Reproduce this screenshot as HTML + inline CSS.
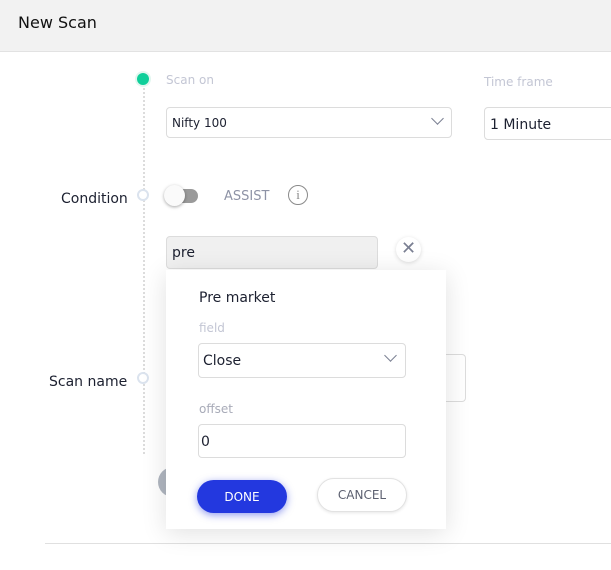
<!DOCTYPE html>
<html><head><meta charset="utf-8"><style>
*{box-sizing:border-box;margin:0;padding:0}
body{width:611px;height:570px;overflow:hidden;background:#fff;font-family:"DejaVu Sans","Liberation Sans",sans-serif;position:relative;color:#1c2030}
.a{position:absolute}
.hdr{left:0;top:0;width:611px;height:52px;background:#f2f2f2;border-bottom:1px solid #e2e2e2}
.box{border:1px solid #dcdcdc;border-radius:4px;background:#fff}
.lbl{font-size:12px;color:#c3c6d4}
.dot{width:12px;height:12px;border-radius:50%;border:2px solid #dbe3ee;background:#fff}
.chev{width:9px;height:9px;border-right:1.5px solid #7a7f92;border-bottom:1.5px solid #7a7f92;transform:rotate(45deg)}
</style></head><body>
<div class="a hdr"></div>
<div class="a" style="left:18px;top:13px;font-size:16px;color:#111">New Scan</div>

<div class="a" style="left:143px;top:84px;height:370px;border-left:2px dotted #dcdcdc"></div>
<div class="a" style="left:137px;top:73px;width:12px;height:12px;border-radius:50%;background:#0fcf9a;box-shadow:0 0 0 2px #e1f7ef"></div>
<div class="a lbl" style="left:166px;top:73px">Scan on</div>
<div class="a lbl" style="left:484px;top:75px">Time frame</div>
<div class="a box" style="left:166px;top:107px;width:286px;height:31px"></div>
<div class="a" style="left:172px;top:116px;font-size:12px">Nifty 100</div>
<div class="a chev" style="left:433px;top:114px"></div>
<div class="a box" style="left:484px;top:107px;width:140px;height:33px"></div>
<div class="a" style="left:490px;top:117px;font-size:14px">1 Minute</div>

<div class="a" style="left:61px;top:191px;font-size:14px">Condition</div>
<div class="a dot" style="left:137px;top:189px"></div>
<div class="a" style="left:166px;top:189px;width:32px;height:14px;border-radius:7px;background:#9a9a9a"></div>
<div class="a" style="left:164px;top:185px;width:21px;height:21px;border-radius:50%;background:#fafafa;box-shadow:0 1px 3px rgba(0,0,0,.35)"></div>
<div class="a" style="left:224px;top:189px;font-size:13px;color:#8e93a6">ASSIST</div>
<div class="a" style="left:288px;top:185px;width:20px;height:20px;border-radius:50%;border:1px solid #8a8a8a;font-size:13px;text-align:center;line-height:18px;color:#888;font-family:'Liberation Serif',serif">i</div>

<div class="a" style="left:166px;top:236px;width:212px;height:33px;border:1px solid #dcdcdc;border-radius:4px;background:#f0f0f0"></div>
<div class="a" style="left:172px;top:245px;font-size:14px">pre</div>
<div class="a" style="left:396px;top:237px;width:25px;height:25px;border-radius:50%;background:#fff;box-shadow:0 1px 4px rgba(0,0,0,.15);text-align:center;line-height:24px;font-size:18px;color:#7a7f92">✕</div>

<div class="a" style="left:49px;top:374px;font-size:14px">Scan name</div>
<div class="a dot" style="left:137px;top:372px"></div>
<div class="a box" style="left:440px;top:354px;width:26px;height:48px;border-left:none;border-radius:0 4px 4px 0"></div>
<div class="a" style="left:158px;top:467px;width:30px;height:30px;border-radius:50%;background:#b0b6c0"></div>
<div class="a" style="left:45px;top:543px;width:566px;border-top:1px solid #e0e0e0"></div>

<div class="a" style="left:166px;top:270px;width:280px;height:259px;background:#fff;box-shadow:0 4px 24px rgba(0,0,0,.12)"></div>
<div class="a" style="left:199px;top:290px;font-size:14px">Pre market</div>
<div class="a lbl" style="left:199px;top:321px">field</div>
<div class="a box" style="left:198px;top:343px;width:208px;height:35px"></div>
<div class="a" style="left:203px;top:353px;font-size:14px">Close</div>
<div class="a chev" style="left:386px;top:351px"></div>
<div class="a lbl" style="left:199px;top:402px;color:#a8abb8">offset</div>
<div class="a box" style="left:198px;top:424px;width:208px;height:34px"></div>
<div class="a" style="left:201px;top:434px;font-size:14px">0</div>
<div class="a" style="left:197px;top:480px;width:90px;height:33px;border-radius:17px;background:#2338df;box-shadow:0 2px 8px rgba(35,56,223,.5);color:#fff;font-size:12px;text-align:center;line-height:34px">DONE</div>
<div class="a" style="left:317px;top:478px;width:90px;height:34px;border-radius:17px;background:#fff;border:1px solid #e2e2e2;box-shadow:0 1px 3px rgba(0,0,0,.1);color:#5c6070;font-size:12px;text-align:center;line-height:33px">CANCEL</div>
</body></html>
